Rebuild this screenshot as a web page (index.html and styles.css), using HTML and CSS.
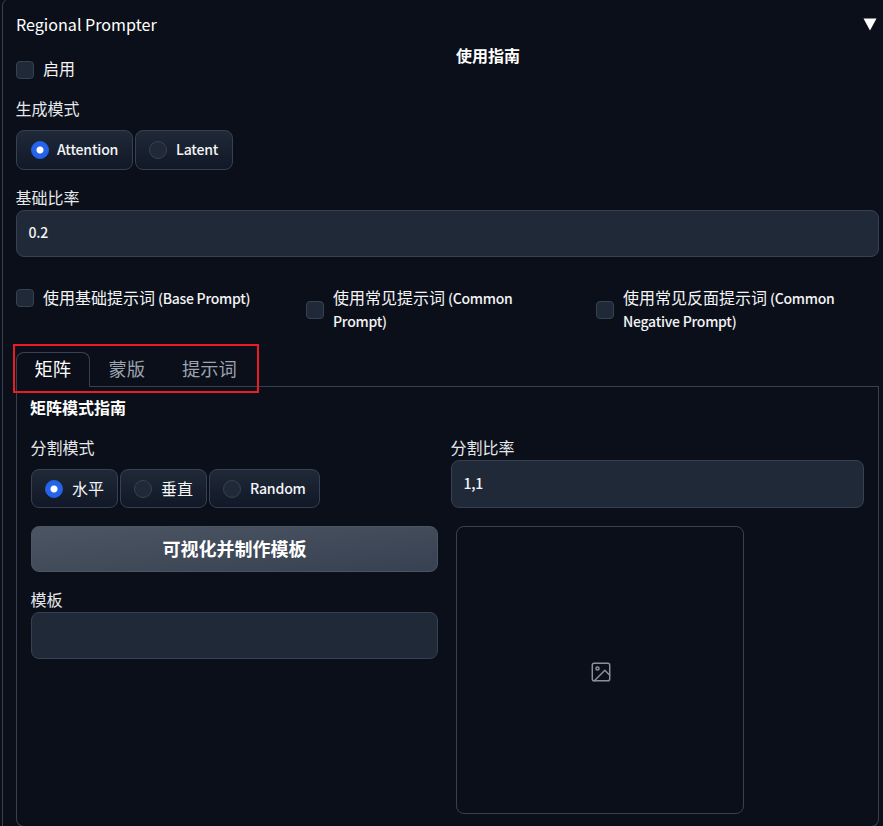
FILE: index.html
```html
<!DOCTYPE html>
<html lang="zh-CN">
<head>
<meta charset="utf-8">
<title>Regional Prompter</title>
<link rel="stylesheet" href="styles.css">
</head>
<body>
<main class="accordion">
  <header class="accordion-head"><span>Regional Prompter</span><svg class="arrow" width="14" height="13" viewBox="0 0 14 13"><path d="M.5 .5h13L7 12.5z" fill="#fff"/></svg></header>
  <section class="intro">
    <label class="check enable"><i class="box"></i><span>启用</span></label>
    <strong class="guide">使用指南</strong>
  </section>
  <div class="label mode-label">生成模式</div>
  <div class="radios">
    <label class="radio attention"><i class="dot on"></i><span class="latin">Attention</span></label>
    <label class="radio latent"><i class="dot"></i><span class="latin">Latent</span></label>
  </div>
  <div class="label ratio-label">基础比率</div>
  <div class="input latin">0.2</div>
  <section class="checks">
    <label class="check"><i class="box"></i><span>使用基础提示词<span class="latin"> (Base Prompt)</span></span></label>
    <label class="check tall"><i class="box"></i><span>使用常见提示词<span class="latin"> (Common<br>Prompt)</span></span></label>
    <label class="check tall"><i class="box"></i><span>使用常见反面提示词<span class="latin"> (Common<br>Negative Prompt)</span></span></label>
  </section>
  <nav class="tabs">
    <span class="tab active">矩阵</span><span class="tab">蒙版</span><span class="tab">提示词</span>
    <div class="highlight"></div>
  </nav>
  <section class="panel">
    <strong class="panel-title">矩阵模式指南</strong>
    <div class="split">
      <div class="split-mode">
        <div class="label">分割模式</div>
        <div class="radios">
          <label class="radio cn"><i class="dot on"></i><span>水平</span></label>
          <label class="radio cn"><i class="dot"></i><span>垂直</span></label>
          <label class="radio random"><i class="dot"></i><span class="latin">Random</span></label>
        </div>
      </div>
      <div class="split-ratio">
        <div class="label">分割比率</div>
        <div class="input latin">1,1</div>
      </div>
    </div>
    <div class="preview">
      <div class="template">
        <button class="make">可视化并制作模板</button>
        <div class="label">模板</div>
        <div class="input"></div>
      </div>
      <div class="image">
        <svg width="22" height="22" viewBox="0 0 24 24" fill="none" stroke="#8b909a" stroke-width="1.6" stroke-linecap="round" stroke-linejoin="round"><rect x="2.5" y="2.5" width="19" height="19" rx="2"/><circle cx="8.2" cy="8.2" r="1.7"/><path d="M4.8 21.5l11.4-11.3 5.3 5.3"/></svg>
      </div>
    </div>
  </section>
</main>
</body>
</html>
```
FILE: styles.css
```css
* { box-sizing: border-box; }
body {
  margin: 0;
  height: 826px;
  overflow: hidden;
  background: #0b0f19;
  color: #f3f4f6;
  font: 16px/24px "Noto Sans CJK SC", sans-serif;
}
.accordion {
  height: 836px;
  margin: -2px -8px 0 2px;
  padding: 15px 11px 0 13px;
  border: 1px solid #374151;
  border-radius: 8px;
}
.accordion-head {
  display: flex;
  justify-content: space-between;
  height: 30px;
  padding-right: 2px;
  font-size: 16.1px;
  line-height: 20px;
  color: #fff;
}
.arrow { margin-top: 4px; }
.intro { display: flex; height: 53px; }
.enable { width: 440px; height: 24px; margin-top: 14px; }
.enable span { padding-bottom: 3px; }
.guide { color: #fff; font-weight: 700; line-height: 22px; }
.check { display: flex; align-items: center; line-height: 23px; }
.box {
  flex: none;
  width: 18px;
  height: 18px;
  margin-right: 9px;
  border: 1px solid #374151;
  border-radius: 4px;
  background: #1f2937;
}
.tall .box { margin-top: 2px; }
.latin { font-size: 14.1px; font-weight: 500; letter-spacing: -0.2px; }
.check .latin { font-size: 14px; letter-spacing: -0.25px; line-height: 0; }
.label { height: 24px; margin-left: -0.5px; line-height: 22px; color: #e5e7eb; }
.mode-label { margin-bottom: 9px; }
.radios { display: flex; gap: 2px; }
.radio {
  display: flex;
  align-items: center;
  height: 40px;
  padding-left: 14px;
  border: 1px solid #374151;
  border-radius: 8px;
  background: linear-gradient(#1f2937, #111827);
}
.radio span { padding-bottom: 2px; }
.attention { width: 117px; }
.latent { width: 98px; padding-left: 13px; }
.dot {
  flex: none;
  width: 18px;
  height: 18px;
  margin-right: 9px;
  border: 1px solid #374151;
  border-radius: 50%;
  background: #1f2937;
}
.attention .dot { margin-right: 8px; }
.dot.on {
  border-color: #2563eb;
  background: radial-gradient(circle, #fff 3px, #2563eb 4px);
}
.ratio-label { margin-top: 16px; }
.input {
  height: 47px;
  padding: 0 11.5px;
  border: 1px solid #374151;
  border-radius: 8px;
  background: #1f2937;
  line-height: 42px;
}
.checks {
  display: grid;
  grid-template-columns: 290px 290px 283px;
  align-items: start;
  height: 46px;
  margin-top: 29px;
}
.tabs {
  position: relative;
  display: flex;
  height: 35px;
  margin-top: 20px;
  border-bottom: 1px solid #374151;
}
.tab {
  height: 35px;
  padding: 0 18.5px;
  color: #9ca3af;
  font-size: 18.3px;
  line-height: 33px;
}
.tab.active {
  padding: 0 17.5px;
  width: 74px;
  border: 1px solid #374151;
  border-bottom: 0;
  border-radius: 8px 8px 0 0;
  background: #0b0f19;
  color: #fff;
  line-height: 31px;
}
.highlight {
  position: absolute;
  left: -3px;
  top: -8px;
  width: 246px;
  height: 49px;
  border: 2px solid #ed1c24;
}
.panel {
  height: 440px;
  padding: 9px 14px 0;
  border: 1px solid #374151;
  border-top: 0;
  border-radius: 0 0 8px 8px;
}
.panel-title { display: block; height: 40px; margin-left: -1px; line-height: 22px; color: #fff; font-weight: 700; }
.split { display: flex; gap: 13px; }
.split-mode { width: 407px; }
.split-mode .radios { margin-top: 9px; }
.split-mode .radio { height: 39px; padding-left: 13px; }
.cn { width: 87px; }
.random { width: 111px; }
.split-ratio { flex: 1; }
.split-ratio .input { height: 48px; line-height: 44px; }
.preview { display: flex; gap: 18px; margin-top: 18px; }
.template { width: 407px; }
.template .label { margin-top: 16px; }
.make {
  display: block;
  width: 100%;
  height: 46px;
  padding: 0 0 2px;
  border: 1px solid #4b5563;
  border-radius: 8px;
  background: linear-gradient(to bottom right, #4b5563, #374151);
  color: #fff;
  font: 700 18px/24px "Noto Sans CJK SC", sans-serif;
}
.image {
  display: flex;
  align-items: center;
  justify-content: center;
  width: 288px;
  height: 288px;
  padding: 3px 0 0 1px;
  border: 1px solid #374151;
  border-radius: 8px;
}
```
